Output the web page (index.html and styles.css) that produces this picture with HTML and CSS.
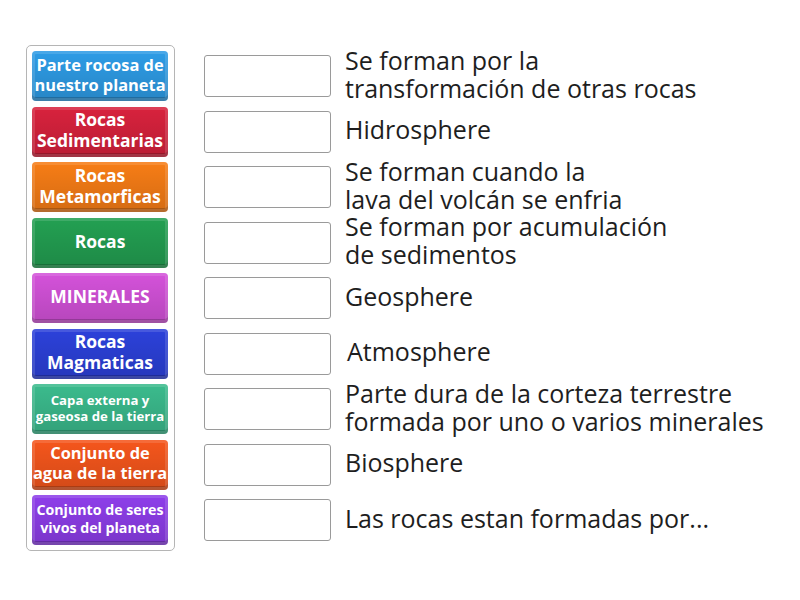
FILE: index.html
```html
<html lang="es">
<head>
  <meta charset="UTF-8" />
  <title>Match up</title>
  <link rel="stylesheet" href="styles.css">
</head>
<body>
  <div class="activity">
    <div class="tiles">
      <div class="tile blue fs16">Parte rocosa de<br>nuestro planeta</div>
      <div class="tile red fs17">Rocas<br>Sedimentarias</div>
      <div class="tile orange fs17">Rocas<br>Metamorficas</div>
      <div class="tile green fs17">Rocas</div>
      <div class="tile pink fs17">MINERALES</div>
      <div class="tile navy fs17">Rocas<br>Magmaticas</div>
      <div class="tile teal fs13">Capa externa y<br>gaseosa de la tierra</div>
      <div class="tile flame fs16">Conjunto de<br>agua de la tierra</div>
      <div class="tile purple fs14">Conjunto de seres<br>vivos del planeta</div>
    </div>

    <div class="rows">
      <div class="row"><div class="slot"></div><div class="label">Se forman por la<br>transformación de otras rocas</div></div>
      <div class="row"><div class="slot"></div><div class="label">Hidrosphere</div></div>
      <div class="row"><div class="slot"></div><div class="label">Se forman cuando la<br>lava del volcán se enfria</div></div>
      <div class="row"><div class="slot"></div><div class="label">Se forman por acumulación<br>de sedimentos</div></div>
      <div class="row"><div class="slot"></div><div class="label">Geosphere</div></div>
      <div class="row"><div class="slot"></div><div class="label shift">Atmosphere</div></div>
      <div class="row"><div class="slot"></div><div class="label">Parte dura de la corteza terrestre<br>formada por uno o varios minerales</div></div>
      <div class="row"><div class="slot"></div><div class="label">Biosphere</div></div>
      <div class="row"><div class="slot"></div><div class="label">Las rocas estan formadas por...</div></div>
    </div>
  </div>
</body>
</html>
```

FILE: styles.css
```css
* { box-sizing: border-box; }

body {
  margin: 0;
  background: #fff;
  font-family: 'Open Sans', 'Noto Sans', sans-serif;
  color: #1e1e1e;
}

.activity {
  display: flex;
  align-items: flex-start;
  padding: 45px 0 0 26px;
}

.tiles {
  width: 149px;
  border: 1px solid #b5b5b5;
  border-radius: 5px;
  padding: 5px 6px 5px 5px;
  display: grid;
  grid-template-rows: repeat(9, 50px);
  row-gap: 5.5px;
}

.tile {
  display: flex;
  align-items: center;
  justify-content: center;
  text-align: center;
  white-space: nowrap;
  color: #fff;
  font-weight: 700;
  border-radius: 4px;
  padding-bottom: 3px;
  background-image: linear-gradient(rgba(0,0,0,0), rgba(0,0,0,0.14));
  box-shadow: inset 0 0 0 3px rgba(255,255,255,0.13), inset 0 -4px 0 rgba(0,0,0,0.2);
}

.fs17 { font-size: 17.5px; line-height: 21px; }
.fs16 { font-size: 16.4px; line-height: 20px; }
.fs14 { font-size: 14.2px; line-height: 18px; }
.fs13 { font-size: 13.2px; line-height: 16px; }

.blue   { background-color: #2e9ce6; }
.red    { background-color: #d8223d; }
.orange { background-color: #f77d16; }
.green  { background-color: #23a052; }
.pink   { background-color: #d452da; }
.navy   { background-color: #2c41da; }
.teal   { background-color: #3bbb8d; }
.flame  { background-color: #f5561c; }
.purple { background-color: #8e3eea; }

.rows {
  padding-top: 6px;
  display: grid;
  grid-template-rows: repeat(9, 50px);
  row-gap: 5.5px;
}

.row {
  display: flex;
  align-items: center;
  padding-left: 29px;
}

.slot {
  width: 127px;
  height: 42px;
  border: 1px solid #9a9a9a;
  border-radius: 3px;
  background: #fff;
  flex-shrink: 0;
}

.label {
  margin-left: 14px;
  font-size: 25px;
  line-height: 28px;
  white-space: nowrap;
  margin-top: -5px;
}

.label.shift { margin-left: 16px; }
```
